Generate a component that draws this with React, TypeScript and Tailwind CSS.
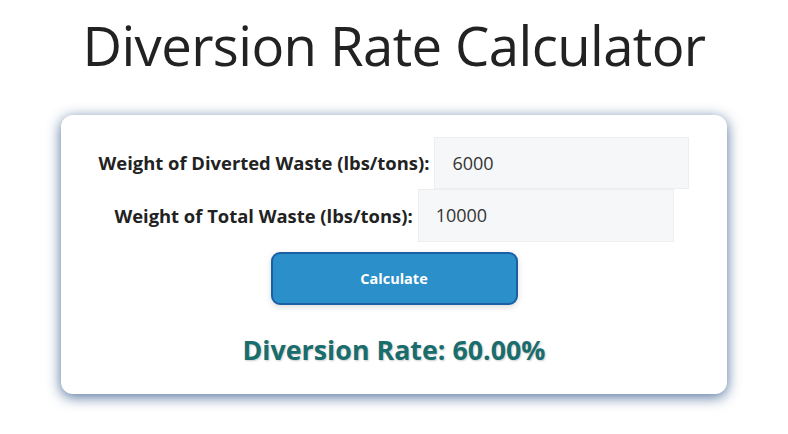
import React from "react";

export default function App() {
  return (
    <div className="w-[788px] h-[434px] bg-white overflow-hidden flex flex-col items-center" style={{ fontFamily: '"Open Sans", "Noto Sans", sans-serif' }}>
      <h1 className="mt-[10px] text-[54.5px] leading-[70px] font-normal text-[#222] tracking-[-0.6px]">Diversion Rate Calculator</h1>
      <div className="mt-[35px] w-[666px] h-[279px] bg-white rounded-[12px] shadow-[0_3px_14px_rgba(50,88,138,0.85)] flex flex-col items-center pt-[22px]">
        <div className="flex items-center">
          <label className="text-[18.4px] font-bold text-[#222] mr-[5px]">Weight of Diverted Waste (lbs/tons):</label>
          <div className="w-[255px] h-[52px] bg-[#f6f7f9] border border-[#eceef0] flex items-center pl-[17px] text-[18px] text-[#333]">6000</div>
        </div>
        <div className="flex items-center">
          <label className="text-[18.4px] font-bold text-[#222] mr-[5px]">Weight of Total Waste (lbs/tons):</label>
          <div className="w-[256px] h-[53px] bg-[#f6f7f9] border border-[#eceef0] flex items-center pl-[17px] text-[18px] text-[#333]">10000</div>
        </div>
        <button className="mt-[10px] w-[247px] h-[53px] bg-[#2b8fca] border-2 border-[#1a5fa3] rounded-[9px] text-white text-[14.5px] font-bold shadow-[0_2px_6px_rgba(0,0,0,0.15)]">Calculate</button>
        <div className="mt-[28px] text-[26.8px] leading-[34px] font-bold text-[#1a6d6d] [text-shadow:1px_1px_2px_rgba(0,0,0,0.2)]">Diversion Rate: 60.00%</div>
      </div>
    </div>
  );
}
